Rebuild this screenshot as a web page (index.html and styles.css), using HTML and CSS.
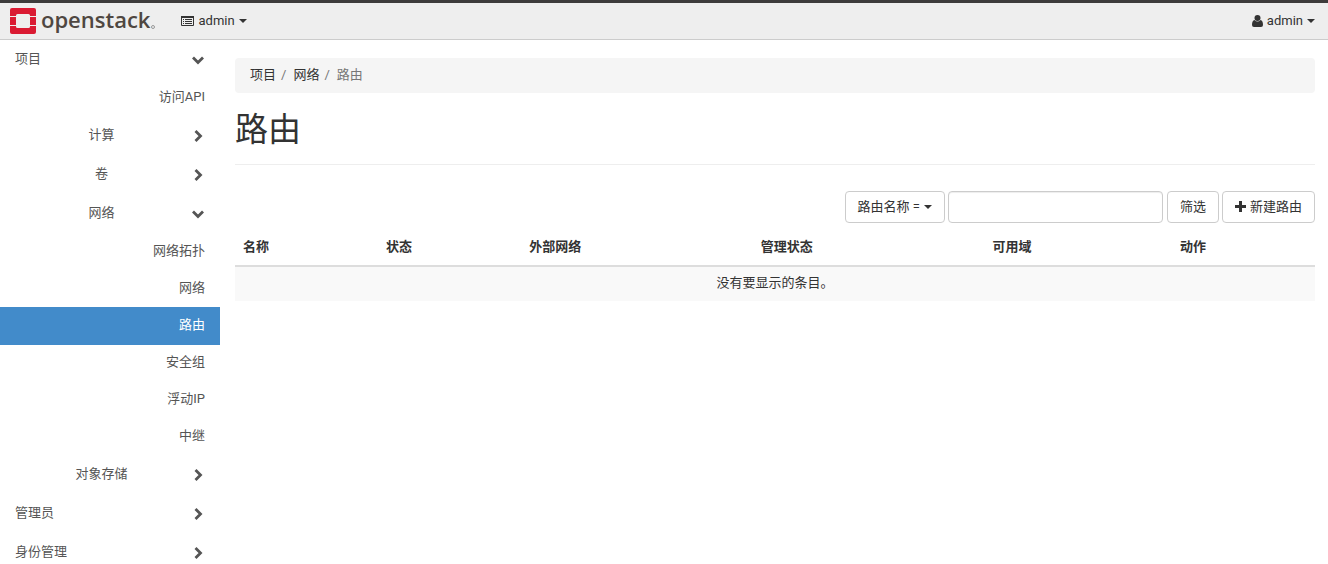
FILE: index.html
```html
<!DOCTYPE html>
<html lang="zh-CN">
<head>
	<meta charset="UTF-8">
	<title>路由 - OpenStack Dashboard</title>
	<link rel="stylesheet" href="styles.css">
</head>
<body>
	<svg class="defs">
		<symbol id="right" viewBox="0 0 14 14"><path d="M4.5 2 L9.5 7 L4.5 12" fill="none" stroke="currentColor" stroke-width="2.8"/></symbol>
		<symbol id="down" viewBox="0 0 14 14"><path d="M2 4.5 L7 9.5 L12 4.5" fill="none" stroke="currentColor" stroke-width="2.8"/></symbol>
	</svg>
	<header class="navbar">
		<a href="#" class="brand">
			<svg class="mark" viewBox="0 0 26 26" fill="#da1a32">
				<path d="M2 0H24Q26 0 26 2V8H20V7.500Q20 6 18.500 6H7.500Q6 6 6 7.500V8H0V2Q0 0 2 0Z"/>
				<path d="M0 9H6V17H0ZM20 9H26V17H20Z"/>
				<path d="M0 18H6V18.500Q6 20 7.500 20H18.500Q20 20 20 18.500V18H26V24Q26 26 24 26H2Q0 26 0 24Z"/>
			</svg>
			<span class="word">openstack</span><span class="dot"></span>
		</a>
		<button type="button" class="menu">
			<svg width="13" height="10" viewBox="0 0 13 10"><path d="M.5 .5H12.500V9.500H.5Z" fill="none" stroke="currentColor"/><path d="M0 0H13V2H0ZM2 3H3V4H2ZM4 3H11V4H4ZM2 5H3V6H2ZM4 5H11V6H4ZM2 7H3V8H2ZM4 7H11V8H4Z" fill="currentColor"/></svg>
			<span>admin</span><i class="caret"></i>
		</button>
		<button type="button" class="menu user">
			<svg width="11" height="12" viewBox="0 0 11 12" fill="currentColor"><circle cx="5.500" cy="3" r="3"/><path d="M2.500 5Q0 5.500 0 10Q0 12 2 12H9Q11 12 11 10Q11 5.500 8.500 5Q5.500 8 2.500 5Z"/></svg>
			<span>admin</span><i class="caret"></i>
		</button>
	</header>
	<div class="wrap">
		<nav class="sidebar">
			<a href="#" class="head"><span>项目</span><svg><use href="#down"/></svg></a>
			<a href="#" class="item">访问API</a>
			<a href="#" class="head sub"><span>计算</span><svg><use href="#right"/></svg></a>
			<a href="#" class="head sub"><span>卷</span><svg><use href="#right"/></svg></a>
			<a href="#" class="head sub"><span>网络</span><svg><use href="#down"/></svg></a>
			<a href="#" class="item">网络拓扑</a>
			<a href="#" class="item">网络</a>
			<a href="#" class="item active">路由</a>
			<a href="#" class="item">安全组</a>
			<a href="#" class="item">浮动IP</a>
			<a href="#" class="item">中继</a>
			<a href="#" class="head sub"><span>对象存储</span><svg><use href="#right"/></svg></a>
			<a href="#" class="head"><span>管理员</span><svg><use href="#right"/></svg></a>
			<a href="#" class="head"><span>身份管理</span><svg><use href="#right"/></svg></a>
		</nav>
		<main class="content">
			<ol class="breadcrumb">
				<li><a href="#">项目</a></li>
				<li><a href="#">网络</a></li>
				<li class="current">路由</li>
			</ol>
			<h1>路由</h1>
			<form class="actions">
				<button type="button" class="btn">路由名称 = <i class="caret"></i></button>
				<input type="text" class="search" aria-label="路由名称">
				<button type="submit" class="btn">筛选</button>
				<button type="button" class="btn"><svg width="11" height="11" viewBox="0 0 11 11"><path d="M4 0H7V4H11V7H7V11H4V7H0V4H4Z" fill="currentColor"/></svg>新建路由</button>
			</form>
			<table class="table">
				<thead>
					<tr>
						<th>名称</th>
						<th>状态</th>
						<th>外部网络</th>
						<th>管理状态</th>
						<th>可用域</th>
						<th>动作</th>
					</tr>
				</thead>
				<tbody>
					<tr>
						<td colspan="6">没有要显示的条目。</td>
					</tr>
				</tbody>
			</table>
		</main>
	</div>
</body>
</html>
```
FILE: styles.css
```css
*{
	box-sizing:border-box;
}
body{
	margin:0;
	color:#333;
	background-color:#fff;
	font:13px/18px Roboto,"Noto Sans CJK SC",sans-serif;
}
a{
	color:inherit;
	text-decoration:none;
}
button,input{
	font:inherit;
	color:inherit;
}
button{
	cursor:pointer;
}
.defs{
	display:none;
}
.navbar{
	display:flex;
	align-items:center;
	height:40px;
	padding:0 13px 0 10px;
	background-color:#eee;
	border-top:3px solid #3d3b3b;
	border-bottom:1px solid #ccc;
}
.brand{
	display:flex;
	align-items:center;
	color:#4f4741;
}
.mark{
	width:26px;
	height:26px;
	margin-right:5px;
}
.word{
	padding-bottom:4px;
	font:600 22px/28px "Open Sans",sans-serif;
}
.dot{
	align-self:flex-end;
	width:4px;
	height:4px;
	margin:0 0 8px 1px;
	border:1px solid #999;
	border-radius:50%;
}
.menu{
	display:flex;
	align-items:center;
	gap:4px;
	margin-left:26px;
	padding:0;
	border:0;
	background:none;
}
.user{
	margin-left:auto;
}
.caret{
	display:inline-block;
	border-top:4px solid;
	border-left:4px solid transparent;
	border-right:4px solid transparent;
	vertical-align:middle;
}
.wrap{
	display:flex;
}
.sidebar{
	flex:0 0 220px;
	color:#555;
}
.head{
	display:flex;
	align-items:center;
	gap:3px;
	height:39px;
	padding:0 15px 2px;
}
.head span{
	flex:1;
}
.head svg{
	width:14px;
	height:14px;
	margin-top:2px;
}
.sub{
	padding-bottom:1px;
	text-align:center;
}
.item{
	display:block;
	height:38px;
	margin-bottom:-1px;
	padding:9px 15px 0;
	text-align:right;
}
.active{
	color:#fff;
	background-color:#428bca;
}
.content{
	flex:1;
	padding:18px 13px 0 15px;
}
.breadcrumb{
	display:flex;
	margin:0 0 17px;
	padding:8px 15px 9px;
	list-style:none;
	background-color:#f5f5f5;
	border-radius:4px;
}
.breadcrumb li + li:before{
	content:"/";
	padding:0 7px 0 5px;
	color:#777;
}
.breadcrumb .current{
	color:#777;
}
h1{
	margin:0 0 26px;
	padding-bottom:14px;
	font-size:33px;
	line-height:40px;
	font-weight:400;
	border-bottom:1px solid #eee;
}
.actions{
	display:flex;
	justify-content:flex-end;
	gap:3px;
	margin:0 0 7px;
}
.btn{
	display:flex;
	align-items:center;
	gap:4px;
	height:32px;
	padding:0 12px 1px;
	background-color:#fff;
	border:1px solid #ccc;
	border-radius:4px;
}
.search{
	width:215px;
	height:32px;
	margin-right:1px;
	padding:6px 12px;
	border:1px solid #ccc;
	border-radius:4px;
	box-shadow:inset 0 1px 1px rgba(0,0,0,.075);
}
.table{
	width:100%;
	border-collapse:collapse;
}
.table th,.table td{
	padding:8px;
}
.table th{
	padding-bottom:9px;
	text-align:left;
	font-weight:700;
	border-bottom:2px solid #ddd;
}
.table td{
	padding:7px 8px 9px;
	text-align:center;
	background-color:#f9f9f9;
}
```
